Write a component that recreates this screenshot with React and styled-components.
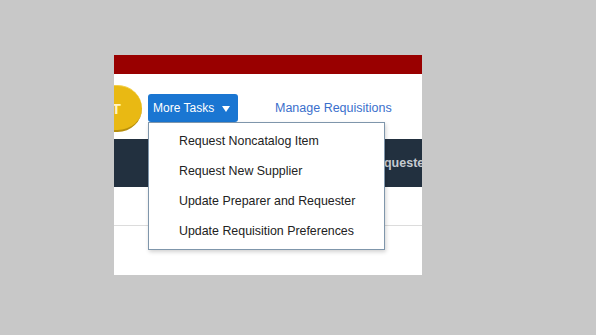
import React from 'react';
import styled, { createGlobalStyle } from 'styled-components';

const GlobalStyle = createGlobalStyle`
  body {
    margin: 0;
    background: #c8c8c8;
    font-family: "Liberation Sans", Arial, sans-serif;
  }
`;

const tasks = [
  'Request Noncatalog Item',
  'Request New Supplier',
  'Update Preparer and Requester',
  'Update Requisition Preferences',
];

const App = () => (
  <Stage>
    <GlobalStyle />
    <Panel>
      <RedBar />
      <Toolbar>
        <SubmitPill>T</SubmitPill>
        <MenuWrap>
          <TasksButton>
            More Tasks
            <Caret />
          </TasksButton>
          <Menu>
            {tasks.map((t) => (
              <MenuItem key={t}>{t}</MenuItem>
            ))}
          </Menu>
        </MenuWrap>
        <Link>Manage Requisitions</Link>
      </Toolbar>
      <DarkBar>
        <BarLabel>Requester</BarLabel>
      </DarkBar>
      <Spacer />
      <Footer />
    </Panel>
  </Stage>
);

const Stage = styled.div`
  padding: 55px 0 0 114px;
`;

const Panel = styled.div`
  width: 308px;
  height: 220px;
  background: #fff;
  display: flex;
  flex-direction: column;
  overflow: hidden;
  position: relative;
`;

const RedBar = styled.div`
  height: 19px;
  background: #990000;
`;

const Toolbar = styled.div`
  height: 65px;
  display: flex;
  align-items: flex-start;
  padding-top: 11px;
  box-sizing: border-box;
`;

const SubmitPill = styled.div`
  width: 80px;
  height: 47px;
  margin-left: -52px;
  background: #e9b913;
  border-top: 1px solid #f2cf4a;
  border-bottom: 2px solid #b78f0c;
  border-radius: 0 26px 26px 0 / 0 25px 25px 0;
  color: #fff3c8;
  font-weight: bold;
  font-size: 15px;
  display: flex;
  align-items: center;
  justify-content: flex-end;
  padding-right: 21px;
  box-sizing: border-box;
  flex-shrink: 0;
`;

const MenuWrap = styled.div`
  position: relative;
  margin-left: 6px;
  margin-top: 9px;
`;

const TasksButton = styled.div`
  width: 90px;
  height: 28px;
  background: #1a76d2;
  border-radius: 3px;
  color: #fff;
  font-size: 12px;
  display: flex;
  align-items: center;
  padding-left: 5px;
  box-sizing: border-box;
`;

const Caret = styled.span`
  width: 0;
  height: 0;
  border-left: 4.5px solid transparent;
  border-right: 4.5px solid transparent;
  border-top: 6px solid #fff;
  margin-left: 8px;
  margin-top: 1px;
`;

const Menu = styled.div`
  position: absolute;
  top: 28px;
  left: 0;
  width: 237px;
  background: #fff;
  border: 1px solid #7f96ab;
  box-sizing: border-box;
  padding: 3px 0;
  box-shadow: 1px 2px 4px rgba(0, 0, 0, 0.18);
  z-index: 2;
`;

const MenuItem = styled.div`
  height: 30px;
  line-height: 30px;
  padding-left: 30px;
  font-size: 12.4px;
  color: #222;
  white-space: nowrap;
`;

const Link = styled.div`
  margin-left: 37px;
  margin-top: 9px;
  height: 28px;
  line-height: 28px;
  font-size: 12.5px;
  color: #3a6fcc;
  white-space: nowrap;
`;

const DarkBar = styled.div`
  height: 48px;
  background: #22303f;
  display: flex;
  align-items: center;
  padding-left: 254px;
  white-space: nowrap;
`;

const BarLabel = styled.span`
  color: #c5cad0;
  font-size: 12.5px;
  font-weight: bold;
`;

const Spacer = styled.div`
  height: 38px;
`;

const Footer = styled.div`
  flex: 1;
  border-top: 1px solid #dcdcdc;
`;

export default App;
